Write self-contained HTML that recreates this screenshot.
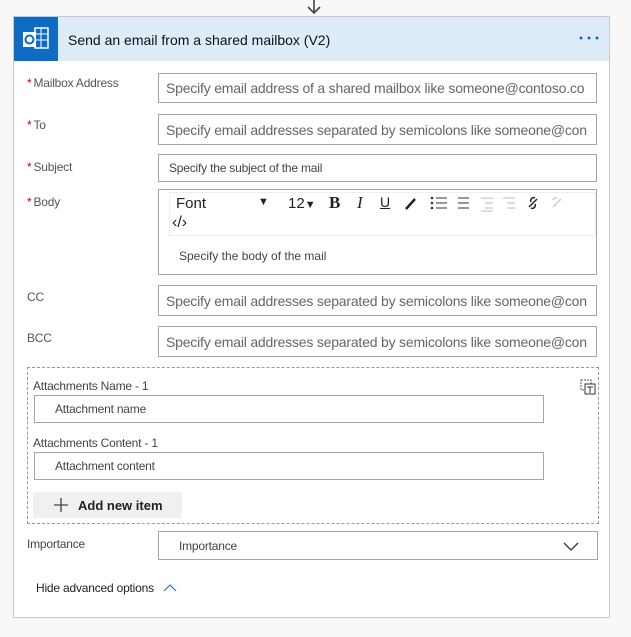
<!DOCTYPE html>
<html><head><style>
*{box-sizing:border-box;margin:0;padding:0}
body{width:631px;height:637px;background:#f8f8f8;font-family:"Liberation Sans",sans-serif;position:relative;overflow:hidden;color:#333}
.a{position:absolute}
.card{left:13px;top:16px;width:597px;height:602px;background:#fff;border:1px solid #c8c8c8}
.hdr{left:14px;top:17px;width:595px;height:44px;background:#deebf8}
.ic{left:14px;top:17px;width:44px;height:44px;background:#0f6cc4}
.lbl{font-size:12px;color:#555;letter-spacing:-0.2px}
.req::before{content:"*";color:#c00;margin-right:2px}
.in{border:1px solid #a6a6a6;background:#fff;font-size:14px;color:#666;padding-left:7px;white-space:nowrap;overflow:hidden;display:flex;align-items:center;letter-spacing:-0.2px}
.sm{font-size:12px;padding-left:20px;color:#444}
.tb{font-size:13px;color:#222}
</style></head><body>
<svg class="a" style="left:305px;top:0" width="18" height="16"><path d="M9 0V13M3 7L9 13L15 7" stroke="#444" stroke-width="1.6" fill="none"/></svg>
<div class="a card"></div>
<div class="a hdr"></div>
<div class="a ic"><svg width="44" height="44"><rect x="21" y="11" width="13" height="20" fill="none" stroke="#fff" stroke-width="1.5"/><path d="M21 17H34M21 23H34M27 11V31" stroke="#fff" stroke-width="1"/><rect x="9" y="15" width="13" height="15" fill="#fff"/><circle cx="15.5" cy="22.5" r="4" fill="none" stroke="#0f6cc4" stroke-width="2"/></svg></div>
<div class="a" style="left:68px;top:32px;font-size:14px;color:#111">Send an email from a shared mailbox (V2)</div>
<svg class="a" style="left:578px;top:35px" width="24" height="6"><g fill="#0f6cc4"><circle cx="3" cy="3" r="1.5"/><circle cx="11" cy="3" r="1.5"/><circle cx="19" cy="3" r="1.5"/></g></svg>

<div class="a lbl req" style="left:27px;top:76px">Mailbox Address</div>
<div class="a in" style="left:158px;top:73px;width:439px;height:30px">Specify email address of a shared mailbox like someone@contoso.co</div>
<div class="a lbl req" style="left:27px;top:118px">To</div>
<div class="a in" style="left:158px;top:114px;width:439px;height:31px">Specify email addresses separated by semicolons like someone@con</div>
<div class="a lbl req" style="left:27px;top:160px">Subject</div>
<div class="a in" style="left:158px;top:154px;width:439px;height:28px;font-size:12px;padding-left:10px;color:#444">Specify the subject of the mail</div>
<div class="a lbl req" style="left:27px;top:195px">Body</div>
<div class="a in" style="left:158px;top:189px;width:439px;height:86px"></div>
<div class="a" style="left:169px;top:192px;width:427px;height:44px;border:1px solid #eee"></div>
<div class="a tb" style="left:176px;top:195px;font-size:15px">Font</div>
<div class="a tb" style="left:258px;top:196px;font-size:11px">▼</div>
<div class="a tb" style="left:288px;top:195px;font-size:15px">12<span style="font-size:11px">▼</span></div>
<div class="a tb" style="left:329px;top:193px;font-size:17px;font-weight:bold;font-family:'Liberation Serif',serif">B</div>
<div class="a tb" style="left:357px;top:193px;font-size:17px;font-style:italic;font-family:'Liberation Serif',serif">I</div>
<div class="a tb" style="left:380px;top:194px;font-size:14px;text-decoration:underline">U</div>
<svg class="a" style="left:403px;top:194px" width="160" height="18"><path d="M3 15L12 5" stroke="#222" stroke-width="2.5"/><g stroke="#333" stroke-width="1"><path d="M33 4H44M33 9H44M33 14H44M55 4H66M55 9H66M55 14H66"/></g><g fill="#333"><circle cx="29" cy="4" r="1.3"/><circle cx="29" cy="9" r="1.3"/><circle cx="29" cy="14" r="1.3"/></g><g stroke="#bbb"><path d="M78 4H90M82 9H90M82 14H90M78 17H90M100 4H112M104 9H112M104 14H112"/></g><path d="M126 13L134 5M128 8a3 3 0 0 1 4-4M132 10a3 3 0 0 1-4 4" stroke="#222" fill="none" stroke-width="1.5"/><path d="M150 13L158 5M150 6a3 3 0 0 1 4-2" stroke="#ccc" stroke-width="1.5" fill="none"/></svg>
<div class="a tb" style="left:172px;top:214px;font-size:16px">‹/›</div>
<div class="a" style="left:179px;top:249px;font-size:12px;color:#444">Specify the body of the mail</div>

<div class="a lbl" style="left:27px;top:290px">CC</div>
<div class="a in" style="left:158px;top:285px;width:439px;height:31px">Specify email addresses separated by semicolons like someone@con</div>
<div class="a lbl" style="left:27px;top:331px">BCC</div>
<div class="a in" style="left:158px;top:326px;width:439px;height:31px">Specify email addresses separated by semicolons like someone@con</div>

<div class="a" style="left:27px;top:367px;width:572px;height:157px;border:1px dashed #999"></div>
<div class="a lbl" style="left:33px;top:379px;color:#444">Attachments Name - 1</div>
<svg class="a" style="left:580px;top:379px" width="16" height="16"><rect x="1" y="1" width="10" height="10" fill="none" stroke="#555" stroke-dasharray="2 1"/><rect x="5" y="5" width="10" height="10" fill="#fff" stroke="#333"/><path d="M7 8H13M10 8V14" stroke="#333"/></svg>
<div class="a in sm" style="left:34px;top:395px;width:510px;height:28px">Attachment name</div>
<div class="a lbl" style="left:33px;top:436px;color:#444">Attachments Content - 1</div>
<div class="a in sm" style="left:34px;top:452px;width:510px;height:28px">Attachment content</div>
<div class="a" style="left:33px;top:492px;width:149px;height:26px;background:#f0f0f0"></div>
<svg class="a" style="left:53px;top:497px" width="16" height="16"><path d="M8 1V15M1 8H15" stroke="#444" stroke-width="1.3"/></svg>
<div class="a" style="left:78px;top:498px;font-size:13px;font-weight:bold;color:#222">Add new item</div>

<div class="a lbl" style="left:27px;top:537px;color:#444">Importance</div>
<div class="a in sm" style="left:158px;top:531px;width:440px;height:29px">Importance</div>
<svg class="a" style="left:563px;top:540px" width="16" height="12"><path d="M1 3L8 10L15 3" stroke="#333" stroke-width="1.3" fill="none"/></svg>
<div class="a" style="left:36px;top:581px;font-size:12px;color:#222;letter-spacing:-0.2px">Hide advanced options</div>
<svg class="a" style="left:163px;top:583px" width="14" height="10"><path d="M1 8L7 2L13 8" stroke="#0f6cc4" fill="none"/></svg>
</body></html>
